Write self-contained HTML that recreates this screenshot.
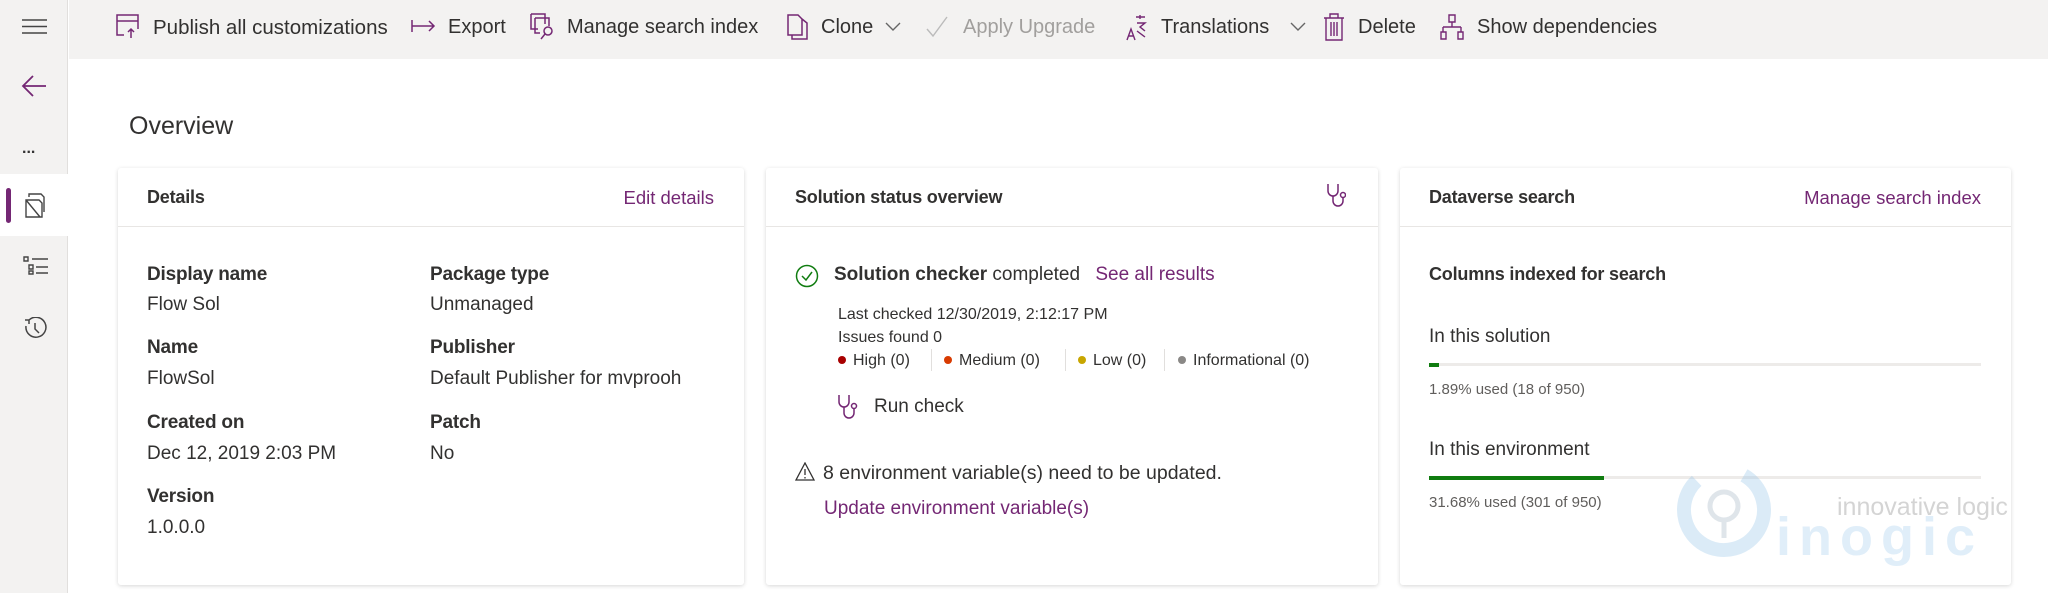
<!DOCTYPE html>
<html><head><meta charset="utf-8"><style>
*{margin:0;padding:0;box-sizing:border-box}
body{width:2048px;height:593px;overflow:hidden;background:#fff;font-family:"Liberation Sans",sans-serif;color:#323130;position:relative}
.a{position:absolute;white-space:nowrap}
.nav{position:absolute;left:0;top:0;width:68px;height:593px;background:#f3f2f1;border-right:1px solid #e1dfdd}
.tb{position:absolute;left:69px;top:0;right:0;height:59px;background:#f3f2f1}
.ti{position:absolute;top:16px;font-size:20px;color:#323130}
.card{position:absolute;top:168px;height:417px;background:#fff;border-radius:3px;box-shadow:0 1px 4px rgba(0,0,0,.16)}
.hd{position:absolute;left:0;right:0;top:0;height:59px;border-bottom:1px solid #e8e6e4}
.ht{font-size:18px;font-weight:bold;color:#323130;letter-spacing:-0.2px}
.lk{color:#742774;font-size:19px}
.lb{font-size:19px;font-weight:bold;letter-spacing:-0.2px}
.vl{font-size:19px}
.sm{font-size:16px}
.dot{display:inline-block;width:8px;height:8px;border-radius:50%;margin-right:7px;vertical-align:1px}
.sep{position:absolute;top:349px;width:1px;height:22px;background:#e1dfdd}
svg{position:absolute}
</style></head><body>
<div class="nav">
<svg style="left:22px;top:19px" width="25" height="15"><path d="M0 1h25M0 7.5h25M0 14h25" stroke="#444" stroke-width="1.6"/></svg>
<svg style="left:21px;top:75px" width="26" height="22"><path d="M25 11H2M12 1L2 11l10 10" stroke="#742774" stroke-width="1.8" fill="none"/></svg>
<div class="a" style="left:22px;top:140px;font-size:16px;font-weight:bold;color:#333">...</div>
<div style="position:absolute;left:0;top:174px;width:68px;height:62px;background:#fff"></div>
<div style="position:absolute;left:6px;top:188px;width:5px;height:35px;border-radius:3px;background:#742774"></div>
<svg style="left:24px;top:193px" width="24" height="25"><path d="M5 4V1h12l3 3v15M2 7h13l3 3v14H2z M2 7l14 17" stroke="#444" stroke-width="1.4" fill="none"/></svg>
<svg style="left:23px;top:256px" width="26" height="19"><path d="M1 1h4v4H1zM6 9h4v4H6zM6 15h4v3H6z M9 3h16M13 11h12M13 17h12" stroke="#444" stroke-width="1.4" fill="none"/></svg>
<svg style="left:23px;top:317px" width="24" height="24"><path d="M6 3A10 10 0 1 1 3 9M2 3l4 0 0 4M12 6v6l4 4" stroke="#444" stroke-width="1.5" fill="none"/></svg>
</div>
<div class="tb"></div>
<svg style="left:116px;top:14px" width="24" height="26"><path d="M1 1h21v6H1zM1 7v14h7M22 7v8M15 24v-9m-3 3l3-3 3 3" stroke="#742774" stroke-width="1.5" fill="none"/></svg>
<div class="ti" style="left:153px;font-size:20.5px">Publish all customizations</div>
<svg style="left:411px;top:19px" width="26" height="14"><path d="M1 1v12M1 7h22m-5-5 5 5-5 5" stroke="#742774" stroke-width="1.5" fill="none"/></svg>
<div class="ti" style="left:448px">Export</div>
<svg style="left:530px;top:13px" width="26" height="27"><path d="M1 1h14v10M1 1v15h7M5 5h14v8M5 5v15h5" stroke="#742774" stroke-width="1.5" fill="none"/><circle cx="18" cy="18" r="4" stroke="#742774" stroke-width="1.5" fill="none"/><path d="M15 21l-4 5" stroke="#742774" stroke-width="1.5"/></svg>
<div class="ti" style="left:567px">Manage search index</div>
<svg style="left:787px;top:14px" width="22" height="26"><path d="M1 1h10l4 4v16H1zM5 21v4h15V9l-5-4" stroke="#742774" stroke-width="1.5" fill="none"/></svg>
<div class="ti" style="left:821px">Clone</div>
<svg style="left:885px;top:22px" width="16" height="10"><path d="M1 1l7 7 7-7" stroke="#666" stroke-width="1.4" fill="none"/></svg>
<svg style="left:926px;top:16px" width="22" height="22"><path d="M1 13l6 7L21 1" stroke="#bbb" stroke-width="1.4" fill="none"/></svg>
<div class="ti" style="left:963px;color:#a19f9d">Apply Upgrade</div>
<svg style="left:1126px;top:15px" width="22" height="26"><path d="M1 25l4-11 4 11M2.5 21h5M10 2h9M14 0v4M11 8h8l-5 4 5 4M11 16l8 6" stroke="#742774" stroke-width="1.4" fill="none"/></svg>
<div class="ti" style="left:1161px">Translations</div>
<svg style="left:1290px;top:22px" width="16" height="10"><path d="M1 1l7 7 7-7" stroke="#666" stroke-width="1.4" fill="none"/></svg>
<svg style="left:1324px;top:13px" width="20" height="28"><path d="M0 5h20M6 5V1h8v4M2 5v22h16V5M7 9v14M10 9v14M13 9v14" stroke="#742774" stroke-width="1.4" fill="none"/></svg>
<div class="ti" style="left:1358px">Delete</div>
<svg style="left:1440px;top:14px" width="24" height="26"><path d="M9 1h6v7H9zM12 8v5M3 13h18M3 13v5M21 13v5M1 18h5v7H1zM18 18h5v7h-5z" stroke="#742774" stroke-width="1.4" fill="none"/></svg>
<div class="ti" style="left:1477px">Show dependencies</div>

<div class="a" style="left:129px;top:112px;font-size:25px;color:#323130">Overview</div>

<div class="card" style="left:118px;width:626px"><div class="hd"></div>
<div class="a ht" style="left:29px;top:19px">Details</div>
<div class="a lk" style="right:30px;top:19px;font-size:18.5px">Edit details</div>
<div class="a lb" style="left:29px;top:96px">Display name</div><div class="a vl" style="left:29px;top:126px">Flow Sol</div>
<div class="a lb" style="left:29px;top:169px">Name</div><div class="a vl" style="left:29px;top:200px">FlowSol</div>
<div class="a lb" style="left:29px;top:244px">Created on</div><div class="a vl" style="left:29px;top:275px">Dec 12, 2019 2:03 PM</div>
<div class="a lb" style="left:29px;top:318px">Version</div><div class="a vl" style="left:29px;top:349px">1.0.0.0</div>
<div class="a lb" style="left:312px;top:96px">Package type</div><div class="a vl" style="left:312px;top:126px">Unmanaged</div>
<div class="a lb" style="left:312px;top:169px">Publisher</div><div class="a vl" style="left:312px;top:200px">Default Publisher for mvprooh</div>
<div class="a lb" style="left:312px;top:244px">Patch</div><div class="a vl" style="left:312px;top:275px">No</div>
</div>

<div class="card" style="left:766px;width:612px"><div class="hd"></div>
<div class="a ht" style="left:29px;top:19px">Solution status overview</div>
<svg style="left:560px;top:15px" width="20" height="26"><path d="M2 1v7a5 5 0 0 0 10 0V1M7 13v5a5 5 0 0 0 10 0v-3" stroke="#742774" stroke-width="1.5" fill="none"/><circle cx="17" cy="12" r="2.5" stroke="#742774" stroke-width="1.5" fill="none"/></svg>
</div>
<svg style="left:795px;top:264px" width="24" height="24"><circle cx="12" cy="12" r="10.5" stroke="#107c10" stroke-width="1.5" fill="none"/><path d="M7 12l4 4 6-8" stroke="#107c10" stroke-width="1.5" fill="none"/></svg>
<div class="a" style="left:834px;top:264px;font-size:19px"><b>Solution checker</b> completed <span class="lk" style="margin-left:10px">See all results</span></div>
<div class="a sm" style="left:838px;top:306px">Last checked 12/30/2019, 2:12:17 PM</div>
<div class="a sm" style="left:838px;top:329px">Issues found 0</div>
<div class="a sm" style="left:838px;top:352px"><span class="dot" style="background:#a80000"></span>High (0)</div>
<div class="sep" style="left:931px"></div>
<div class="a sm" style="left:944px;top:352px"><span class="dot" style="background:#d83b01"></span>Medium (0)</div>
<div class="sep" style="left:1065px"></div>
<div class="a sm" style="left:1078px;top:352px"><span class="dot" style="background:#c8a600"></span>Low (0)</div>
<div class="sep" style="left:1164px"></div>
<div class="a sm" style="left:1178px;top:352px"><span class="dot" style="background:#8a8886"></span>Informational (0)</div>
<svg style="left:837px;top:394px" width="22" height="28"><path d="M2 1v7a5 5 0 0 0 10 0V1M7 13v6a5 5 0 0 0 10 0v-4" stroke="#742774" stroke-width="1.5" fill="none"/><circle cx="17" cy="12" r="2.5" stroke="#742774" stroke-width="1.5" fill="none"/></svg>
<div class="a" style="left:874px;top:396px;font-size:19px">Run check</div>
<svg style="left:795px;top:462px" width="20" height="19"><path d="M10 1L1 18h18z M10 7v6M10 15v1.5" stroke="#323130" stroke-width="1.3" fill="none"/></svg>
<div class="a" style="left:823px;top:462px;font-size:19.5px">8 environment variable(s) need to be updated.</div>
<div class="a lk" style="left:824px;top:498px">Update environment variable(s)</div>

<div class="card" style="left:1400px;width:611px"><div class="hd"></div>
<div class="a ht" style="left:29px;top:19px">Dataverse search</div>
<div class="a lk" style="right:30px;top:19px;font-size:18.5px">Manage search index</div>
<div class="a lb" style="left:29px;top:96px;font-size:18px">Columns indexed for search</div>
<div class="a" style="left:29px;top:158px;font-size:19px">In this solution</div>
<div style="position:absolute;left:29px;top:195px;width:552px;height:3px;background:#edebe9"><div style="width:10px;height:4px;background:#107c10"></div></div>
<div class="a sm" style="left:29px;top:213px;color:#605e5c;font-size:15px">1.89% used (18 of 950)</div>
<div class="a" style="left:29px;top:271px;font-size:19px">In this environment</div>
<div style="position:absolute;left:29px;top:308px;width:552px;height:3px;background:#edebe9"><div style="width:175px;height:4px;background:#107c10"></div></div>
<div class="a sm" style="left:29px;top:326px;color:#605e5c;font-size:15px">31.68% used (301 of 950)</div>
</div>
<svg style="left:1676px;top:458px" width="96" height="100" opacity="0.3"><circle cx="48" cy="52" r="40" stroke="#8bbfe6" stroke-width="14" fill="none" stroke-dasharray="200 60" transform="rotate(-60 48 52)"/><circle cx="48" cy="48" r="14" stroke="#9ab" stroke-width="5" fill="none"/><path d="M48 62v18" stroke="#9ab" stroke-width="5"/></svg>
<div class="a" style="left:1837px;top:493px;font-size:25px;color:#d4d4d4">innovative logic</div>
<div class="a" style="left:1776px;top:506px;font-size:54px;font-weight:bold;color:#e0eef9;letter-spacing:8px;width:234px;overflow:hidden">inogic</div>
</body></html>
